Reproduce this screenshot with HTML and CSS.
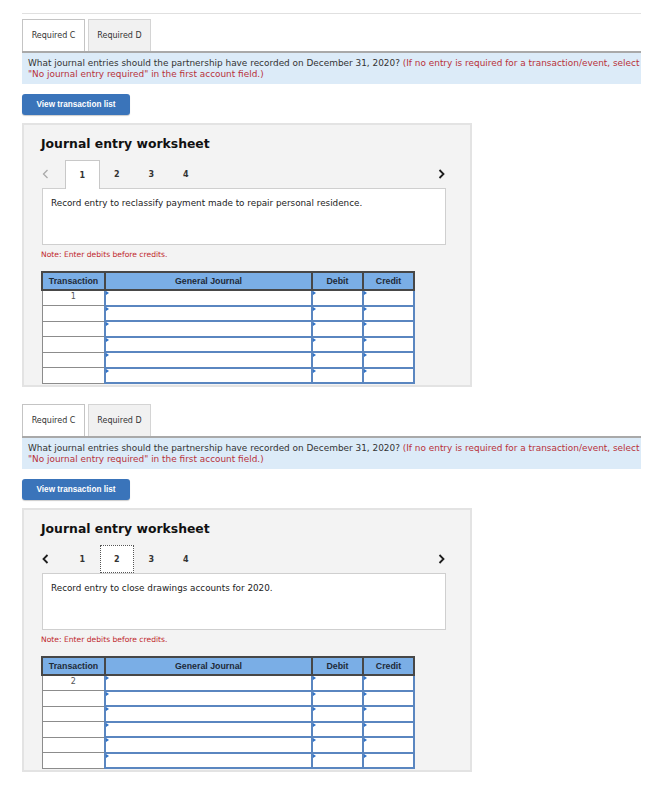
FILE: index.html
```html
<!DOCTYPE html>
<html lang="en">

<head>
  <meta charset="UTF-8">
  <meta name="viewport" content="width=device-width, initial-scale=1.0">
  <title>Journal entry worksheet</title>
  <link rel="stylesheet" href="styles.css">
</head>

<body>
  <div class="page">
    <div class="rule"></div>

    <!-- Part 1: entry 1 -->
    <section class="part">
      <div class="part-tabs">
        <div class="tab active">Required C</div>
        <div class="tab">Required D</div>
      </div>
      <div class="question">
        <span class="ask">What journal entries should the partnership have recorded on December 31, 2020?</span>
        <span class="hint">(If no entry is required for a transaction/event, select</span><br>
        <span class="hint">"No journal entry required" in the first account field.)</span>
      </div>
      <button class="list-btn">View transaction list</button>

      <div class="worksheet">
        <h2>Journal entry worksheet</h2>
        <div class="pager">
          <span class="pager-prev">
            <svg width="7" height="10" viewBox="0 0 7 10"><path d="M5.5 1 L1.5 5 L5.5 9" fill="none" stroke="#a9a9a9" stroke-width="1.3"/></svg>
          </span>
          <span class="pager-item active">1</span>
          <span class="pager-item">2</span>
          <span class="pager-item">3</span>
          <span class="pager-item">4</span>
          <span class="pager-next">
            <svg width="7" height="10" viewBox="0 0 7 10"><path d="M1.5 1 L5.5 5 L1.5 9" fill="none" stroke="#1d1d1d" stroke-width="1.8"/></svg>
          </span>
        </div>
        <div class="description">Record entry to reclassify payment made to repair personal residence.</div>
        <p class="note">Note: Enter debits before credits.</p>

        <table class="journal">
          <thead>
            <tr>
              <th class="col-trans">Transaction</th>
              <th class="col-journal">General Journal</th>
              <th class="col-amount">Debit</th>
              <th class="col-amount">Credit</th>
            </tr>
          </thead>
          <tbody>
            <tr><td class="trans">1</td><td class="field"></td><td class="field"></td><td class="field"></td></tr>
            <tr><td class="trans"></td><td class="field"></td><td class="field"></td><td class="field"></td></tr>
            <tr><td class="trans"></td><td class="field"></td><td class="field"></td><td class="field"></td></tr>
            <tr><td class="trans"></td><td class="field"></td><td class="field"></td><td class="field"></td></tr>
            <tr><td class="trans"></td><td class="field"></td><td class="field"></td><td class="field"></td></tr>
            <tr><td class="trans"></td><td class="field"></td><td class="field"></td><td class="field"></td></tr>
          </tbody>
        </table>
      </div>
    </section>

    <!-- Part 2: entry 2 -->
    <section class="part">
      <div class="part-tabs">
        <div class="tab active">Required C</div>
        <div class="tab">Required D</div>
      </div>
      <div class="question">
        <span class="ask">What journal entries should the partnership have recorded on December 31, 2020?</span>
        <span class="hint">(If no entry is required for a transaction/event, select</span><br>
        <span class="hint">"No journal entry required" in the first account field.)</span>
      </div>
      <button class="list-btn">View transaction list</button>

      <div class="worksheet">
        <h2>Journal entry worksheet</h2>
        <div class="pager">
          <span class="pager-prev">
            <svg width="7" height="10" viewBox="0 0 7 10"><path d="M5.5 1 L1.5 5 L5.5 9" fill="none" stroke="#1d1d1d" stroke-width="1.8"/></svg>
          </span>
          <span class="pager-item">1</span>
          <span class="pager-item active focused">2</span>
          <span class="pager-item">3</span>
          <span class="pager-item">4</span>
          <span class="pager-next">
            <svg width="7" height="10" viewBox="0 0 7 10"><path d="M1.5 1 L5.5 5 L1.5 9" fill="none" stroke="#1d1d1d" stroke-width="1.8"/></svg>
          </span>
        </div>
        <div class="description">Record entry to close drawings accounts for 2020.</div>
        <p class="note">Note: Enter debits before credits.</p>

        <table class="journal">
          <thead>
            <tr>
              <th class="col-trans">Transaction</th>
              <th class="col-journal">General Journal</th>
              <th class="col-amount">Debit</th>
              <th class="col-amount">Credit</th>
            </tr>
          </thead>
          <tbody>
            <tr><td class="trans">2</td><td class="field"></td><td class="field"></td><td class="field"></td></tr>
            <tr><td class="trans"></td><td class="field"></td><td class="field"></td><td class="field"></td></tr>
            <tr><td class="trans"></td><td class="field"></td><td class="field"></td><td class="field"></td></tr>
            <tr><td class="trans"></td><td class="field"></td><td class="field"></td><td class="field"></td></tr>
            <tr><td class="trans"></td><td class="field"></td><td class="field"></td><td class="field"></td></tr>
            <tr><td class="trans"></td><td class="field"></td><td class="field"></td><td class="field"></td></tr>
          </tbody>
        </table>
      </div>
    </section>
  </div>
</body>

</html>
```

FILE: styles.css
```css
/* General body styles */
body {
    margin: 0;
    background: #fff;
    color: #333;
    font-family: "DejaVu Sans", Verdana, sans-serif;
    font-size: 8.8px;
}

.page {
    width: 619px;
    margin-left: 22px;
}

.rule {
    height: 1px;
    margin-top: 13px;
    background: #e0e0e0;
}

/* Required C / D tabs */
.part-tabs {
    display: flex;
    gap: 3px;
    margin-top: 17px;
}

.part:first-of-type .part-tabs {
    margin-top: 5px;
}

.tab {
    width: 63px;
    height: 32px;
    box-sizing: border-box;
    display: flex;
    align-items: center;
    justify-content: center;
    border: 1px solid #d4d4d4;
    border-bottom: none;
    background: #f1f1f1;
    color: #333;
    font-size: 8px;
}

.tab.active {
    background: #fff;
    border-color: #c4c4c4;
}

/* Question box */
.question {
    border-top: 2px solid #a9a9a9;
    background: #dcebf8;
    padding: 5px 6px 4px;
    line-height: 11px;
    font-size: 8.92px;
    white-space: nowrap;
}

.question .hint {
    color: #b8323a;
}

.list-btn {
    display: block;
    width: 108px;
    height: 21px;
    margin-top: 10px;
    padding: 0;
    border: none;
    border-radius: 3px;
    background: #3a74ba;
    color: #fff;
    font-family: "Liberation Sans", Arial, sans-serif;
    font-size: 8.2px;
    font-weight: bold;
    box-shadow: 0 1px 1px rgba(0, 0, 0, 0.2);
}

/* Worksheet panel */
.worksheet {
    width: 450px;
    height: 264px;
    box-sizing: border-box;
    margin-top: 8px;
    padding: 12px 24px 0 17px;
    border: 2px solid #e3e3e3;
    background: #f3f3f3;
}

.worksheet h2 {
    margin: 0;
    font-size: 12.4px;
    line-height: 14px;
    color: #111;
}

.pager {
    display: flex;
    align-items: stretch;
    height: 28px;
    margin-top: 9px;
    position: relative;
    z-index: 1;
}

.pager-prev {
    width: 24px;
    display: flex;
    align-items: center;
    padding-left: 1px;
    box-sizing: border-box;
}

.pager-next {
    margin-left: auto;
    display: flex;
    align-items: center;
    padding-right: 1px;
}

.pager-item {
    width: 34.5px;
    box-sizing: border-box;
    display: flex;
    align-items: center;
    justify-content: center;
    font-size: 8px;
    font-weight: bold;
    color: #333;
}

.pager-item.active {
    background: #fff;
    border: 1px solid #c8c8c8;
    border-bottom: none;
    margin-bottom: -1px;
}

.pager-item.focused {
    border: 1px dotted #555;
    margin-bottom: 0;
}

.description {
    height: 57px;
    box-sizing: border-box;
    margin-left: 1px;
    padding: 9px 8px;
    border: 1px solid #cfcfcf;
    background: #fff;
    line-height: 11px;
    color: #222;
}

.note {
    margin: 5px 0 0;
    line-height: 10px;
    font-size: 7.6px;
    color: #c0282d;
}

/* Journal table */
.journal {
    margin-top: 11px;
    border-collapse: collapse;
    table-layout: fixed;
}

.journal th {
    height: 16px;
    padding: 0;
    border: 2px solid #474747;
    background: #7aaee6;
    color: #1e2a38;
    font-family: "Liberation Sans", Arial, sans-serif;
    font-size: 8.8px;
    font-weight: bold;
    text-align: center;
}

.col-trans { width: 61px; }
.col-journal { width: 205px; }
.col-amount { width: 49px; }

.journal td {
    height: 13.5px;
    padding: 0;
    background: #fff;
}

.journal td.trans {
    border: 1px solid #8c8c8c;
    text-align: center;
    vertical-align: top;
    line-height: 12px;
    font-size: 8px;
    color: #555;
}

.journal td.field {
    position: relative;
    border: 2px solid #5a86c0;
}

/* small marker in the corner of each input cell */
.journal td.field::before {
    content: "";
    position: absolute;
    top: 0;
    left: 0;
    border-left: 3px solid #2f72c6;
    border-top: 2px solid transparent;
    border-bottom: 2px solid transparent;
}
```
